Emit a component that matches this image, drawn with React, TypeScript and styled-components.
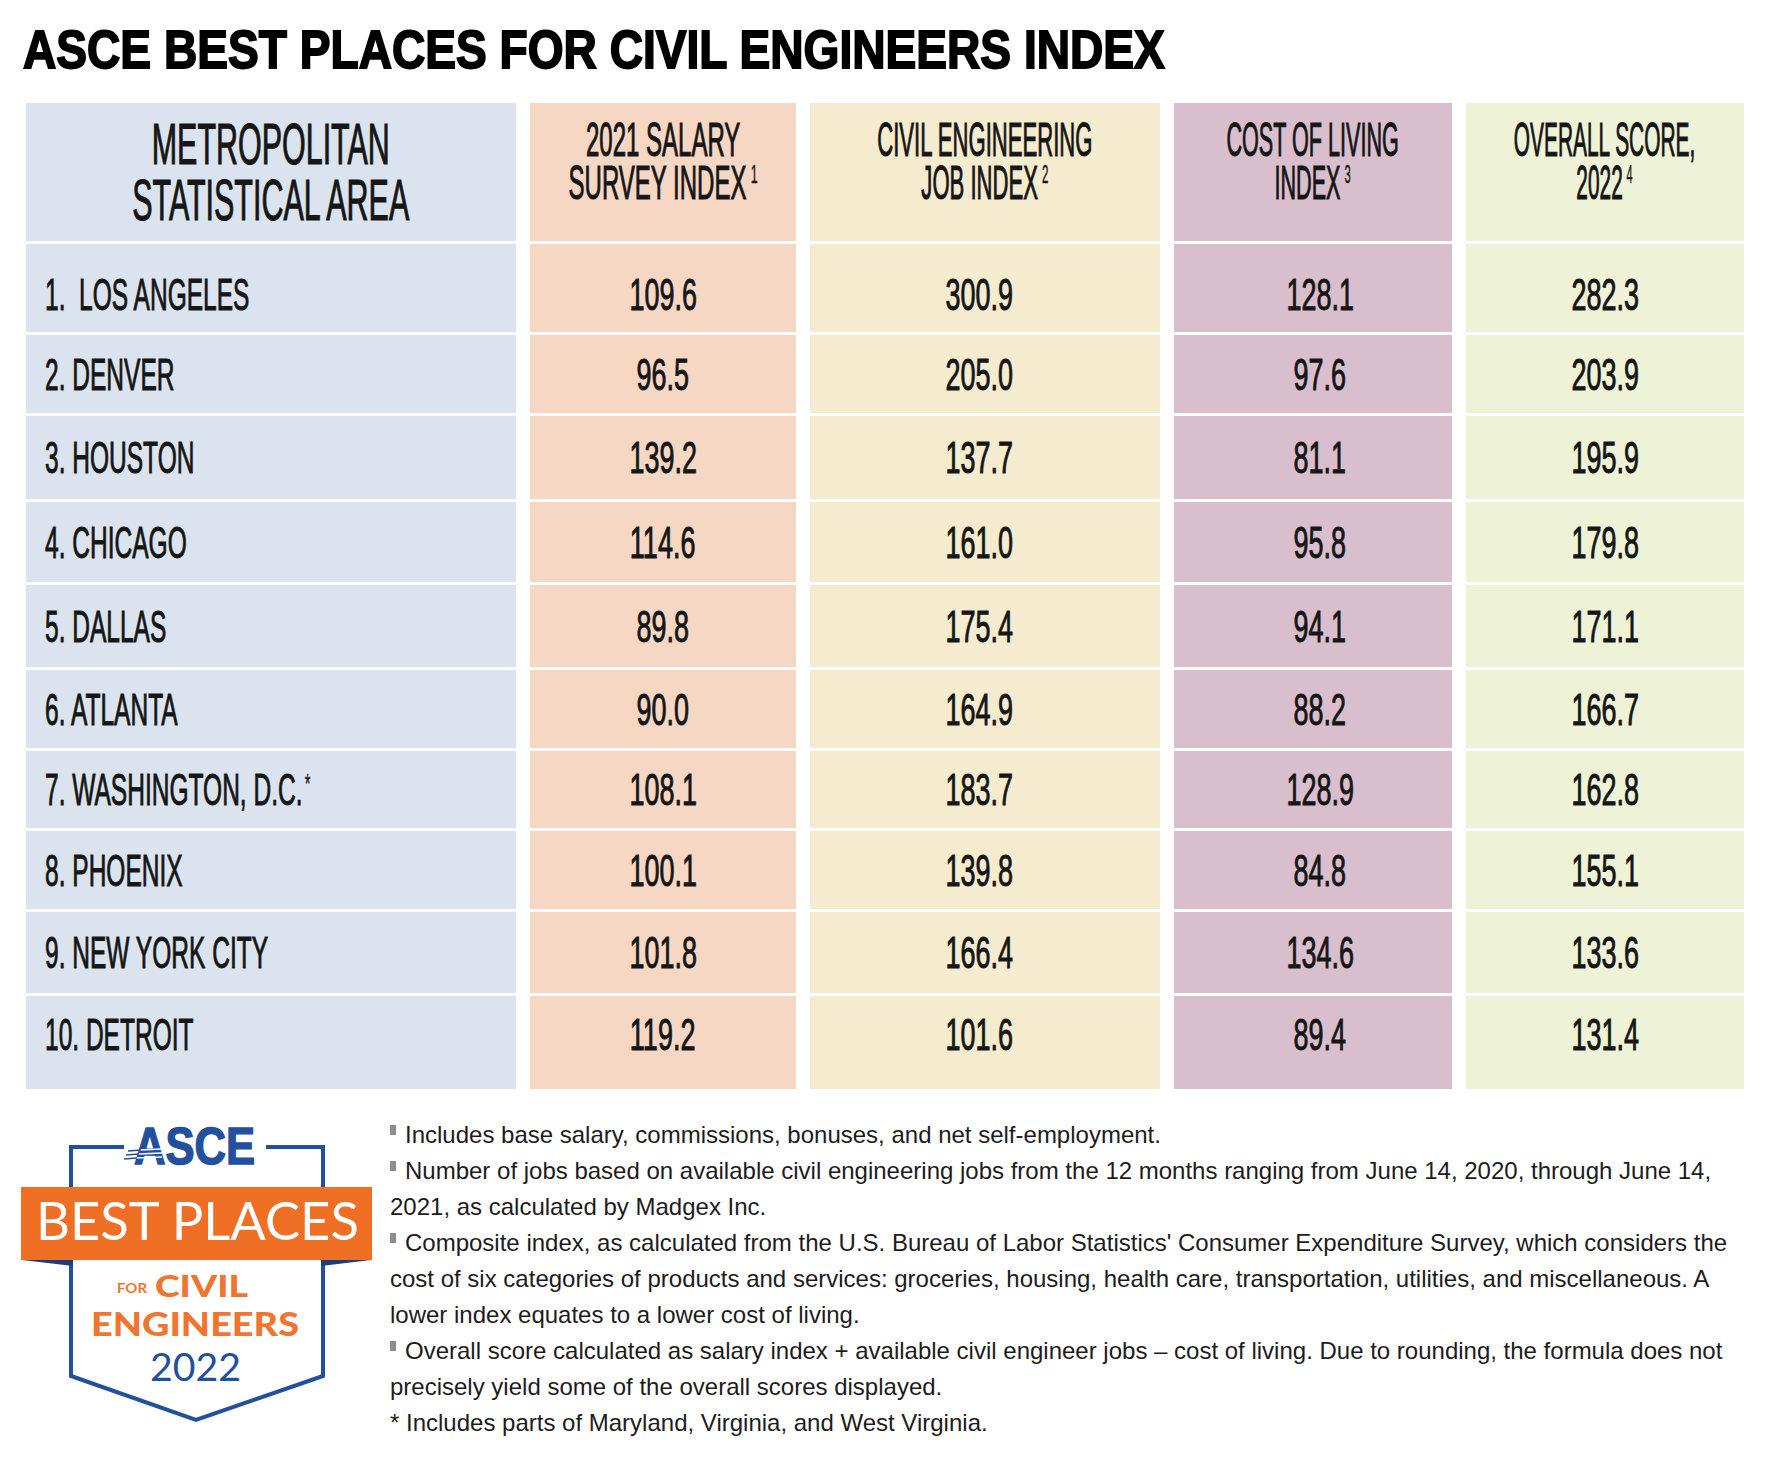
import React from "react";
import styled, { createGlobalStyle } from "styled-components";

// Global
const GlobalStyle = createGlobalStyle`
  html, body {
    margin: 0;
    padding: 0;
    background: #ffffff;
  }
`;

// Colonnes (shift = décalage horizontal des chiffres)
const COLS = [
  { bg: "#dbe4ee", shift: 0 },
  { bg: "#f6d7c4", shift: 0 },
  { bg: "#f5ebcf", shift: -6 },
  { bg: "#d9bfce", shift: 7 },
  { bg: "#eef3d7", shift: 0 },
];

const ROWS = [
  ["1.  LOS ANGELES", "109.6", "300.9", "128.1", "282.3"],
  ["2. DENVER", "96.5", "205.0", "97.6", "203.9"],
  ["3. HOUSTON", "139.2", "137.7", "81.1", "195.9"],
  ["4. CHICAGO", "114.6", "161.0", "95.8", "179.8"],
  ["5. DALLAS", "89.8", "175.4", "94.1", "171.1"],
  ["6. ATLANTA", "90.0", "164.9", "88.2", "166.7"],
  ["7. WASHINGTON, D.C.", "108.1", "183.7", "128.9", "162.8"],
  ["8. PHOENIX", "100.1", "139.8", "84.8", "155.1"],
  ["9. NEW YORK CITY", "101.8", "166.4", "134.6", "133.6"],
  ["10. DETROIT", "119.2", "101.6", "89.4", "131.4"],
];

// Styled Components
const Page = styled.div`
  width: 1769px;
  height: 1469px;
  box-sizing: border-box;
  padding: 23px 0 0 20px;
  background: #ffffff;
  font-family: "Liberation Sans", Arial, sans-serif;
  color: #111111;
  overflow: hidden;
`;

const Title = styled.h1`
  margin: 0 0 27px 3px;
  font-size: 53px;
  line-height: 53px;
  font-weight: 700;
  color: #000000;
  white-space: nowrap;
  transform: scaleX(0.87);
  transform-origin: left center;
  -webkit-text-stroke: 1.8px #000000;
`;

const Table = styled.div`
  display: grid;
  grid-template-columns: 490px 266px 350px 278px 278px;
  grid-template-rows: 138px 88px 78px 83px 80px 82px 78px 77px 78px 81px 93px;
  column-gap: 14px;
  row-gap: 3px;
  margin-left: 6px;
`;

const HeadCell = styled.div<{ $bg: string; $main?: boolean }>`
  background: ${(p) => p.$bg};
  display: flex;
  justify-content: center;
  align-items: ${(p) => (p.$main ? "center" : "flex-start")};
  padding-top: ${(p) => (p.$main ? "0" : "15px")};
  box-sizing: border-box;
  min-width: 0;
  text-align: center;
  font-weight: 400;
  -webkit-text-stroke: 1.1px #161616;
  color: #161616;
  font-size: ${(p) => (p.$main ? "58px" : "48px")};
  line-height: ${(p) => (p.$main ? "56px" : "43px")};
`;

const Cell = styled.div<{ $bg: string; $label?: boolean; $shift?: number; $first?: boolean; $last?: boolean }>`
  background: ${(p) => p.$bg};
  display: flex;
  align-items: center;
  justify-content: ${(p) => (p.$label ? "flex-start" : "center")};
  box-sizing: border-box;
  padding-left: ${(p) => (p.$label ? 19 : Math.max(0, (p.$shift || 0) * 2))}px;
  padding-right: ${(p) => Math.max(0, -(p.$shift || 0) * 2)}px;
  padding-top: ${(p) => (p.$first ? "12px" : "0")};
  padding-bottom: ${(p) => (p.$last ? "16px" : "0")};
  min-width: 0;
  font-size: 45px;
  line-height: 45px;
  font-weight: 400;
  color: #161616;
  -webkit-text-stroke: 1px #161616;
`;

const Squeeze = styled.span<{ $sx: number; $left?: boolean }>`
  display: inline-block;
  flex: none;
  white-space: pre;
  transform: scaleX(${(p) => p.$sx});
  transform-origin: ${(p) => (p.$left ? "left center" : "center center")};
`;

const Sup = styled.span`
  position: relative;
  top: -0.64em;
  margin-left: 0.35em;
  font-size: 0.52em;
  line-height: 0;
  -webkit-text-stroke: 0.4px #161616;
`;

const Star = styled.span`
  position: relative;
  top: -0.45em;
  margin-left: 0.15em;
  font-size: 0.6em;
  line-height: 0;
  -webkit-text-stroke: 0.3px #161616;
`;

const Bottom = styled.div`
  display: flex;
  align-items: flex-start;
  gap: 18px;
  margin-top: 28px;
`;

const Badge = styled.svg`
  flex: none;
  margin-top: 5px;
  display: block;
`;

const Notes = styled.div`
  font-family: "Liberation Sans", Arial, sans-serif;
  font-size: 24px;
  line-height: 36px;
  color: #1e1b1c;
  white-space: nowrap;
`;

const Line = styled.div``;

const Marker = styled.span`
  display: inline-block;
  width: 6px;
  height: 10px;
  margin-right: 9px;
  background: #8c8c8c;
  vertical-align: 8px;
`;

function Logo() {
  return (
    <Badge width={352} height={302} viewBox="0 0 352 302">
      <path
        d="M104 25 H51 V254 L176 298 L303 254 V25 H246"
        fill="none"
        stroke="#22509c"
        strokeWidth={4}
      />
      <polygon points="2,138 53,138 53,144" fill="#1c3e7c" />
      <polygon points="351,138 301,138 301,144" fill="#1c3e7c" />
      <rect x={1} y={65} width={351} height={73} fill="#ef6f25" />
      <text
        x={114}
        y={42}
        fontFamily="Liberation Sans, Arial, sans-serif"
        fontWeight={700}
        fontSize={52}
        fill="#22509c"
        stroke="#22509c"
        strokeWidth={1.5}
        textLength={121}
        lengthAdjust="spacingAndGlyphs"
      >
        ASCE
      </text>
      <g stroke="#ffffff" strokeWidth={1.6}>
        <line x1={120} y1={28} x2={142} y2={27} />
        <line x1={118} y1={32} x2={142} y2={31} />
        <line x1={116} y1={36} x2={142} y2={35} />
      </g>
      <g stroke="#22509c" strokeWidth={1.6}>
        <line x1={108} y1={29} x2={121} y2={28} />
        <line x1={106} y1={33} x2={119} y2={32} />
        <line x1={104} y1={37} x2={117} y2={36} />
      </g>
      <text
        x={16}
        y={118}
        fontFamily="Lato, sans-serif"
        fontWeight={400}
        fontSize={52}
        fill="#ffffff"
        textLength={323}
        lengthAdjust="spacingAndGlyphs"
      >
        BEST PLACES
      </text>
      <text
        x={97}
        y={171}
        fontFamily="Lato, sans-serif"
        fontWeight={700}
        fontSize={14}
        fill="#ef7531"
        textLength={30}
        lengthAdjust="spacingAndGlyphs"
      >
        FOR
      </text>
      <text
        x={135}
        y={175}
        fontFamily="Lato, sans-serif"
        fontWeight={900}
        fontSize={31}
        fill="#ef7531"
        textLength={93}
        lengthAdjust="spacingAndGlyphs"
      >
        CIVIL
      </text>
      <text
        x={71}
        y={214}
        fontFamily="Lato, sans-serif"
        fontWeight={900}
        fontSize={33}
        fill="#ef7531"
        textLength={208}
        lengthAdjust="spacingAndGlyphs"
      >
        ENGINEERS
      </text>
      <text
        x={130}
        y={259}
        fontFamily="Lato, sans-serif"
        fontWeight={400}
        fontSize={39}
        fill="#22509c"
        textLength={91}
        lengthAdjust="spacingAndGlyphs"
      >
        2022
      </text>
    </Badge>
  );
}

function App() {
  return (
    <React.Fragment>
      <GlobalStyle />
      <Page>
        <Title>ASCE BEST PLACES FOR CIVIL ENGINEERS INDEX</Title>

        {/* Tableau */}
        <Table>
          <HeadCell $bg={COLS[0].bg} $main>
            <Squeeze $sx={0.525}>
              METROPOLITAN
              <br />
              STATISTICAL AREA
            </Squeeze>
          </HeadCell>
          <HeadCell $bg={COLS[1].bg}>
            <Squeeze $sx={0.5}>
              2021 SALARY
              <br />
              SURVEY INDEX<Sup>1</Sup>
            </Squeeze>
          </HeadCell>
          <HeadCell $bg={COLS[2].bg}>
            <Squeeze $sx={0.46}>
              CIVIL ENGINEERING
              <br />
              JOB INDEX<Sup>2</Sup>
            </Squeeze>
          </HeadCell>
          <HeadCell $bg={COLS[3].bg}>
            <Squeeze $sx={0.45}>
              COST OF LIVING
              <br />
              INDEX<Sup>3</Sup>
            </Squeeze>
          </HeadCell>
          <HeadCell $bg={COLS[4].bg}>
            <Squeeze $sx={0.435}>
              OVERALL SCORE,
              <br />
              2022<Sup>4</Sup>
            </Squeeze>
          </HeadCell>

          {ROWS.map((row, r) =>
            row.map((value, c) =>
              c === 0 ? (
                <Cell
                  key={`${r}-${c}`}
                  $bg={COLS[c].bg}
                  $label
                  $first={r === 0}
                  $last={r === ROWS.length - 1}
                >
                  <Squeeze $sx={0.545} $left>
                    {value}
                    {r === 6 && <Star>*</Star>}
                  </Squeeze>
                </Cell>
              ) : (
                <Cell
                  key={`${r}-${c}`}
                  $bg={COLS[c].bg}
                  $shift={COLS[c].shift}
                  $first={r === 0}
                  $last={r === ROWS.length - 1}
                >
                  <Squeeze $sx={0.6}>{value}</Squeeze>
                </Cell>
              )
            )
          )}
        </Table>

        {/* Notes */}
        <Bottom>
          <Logo />
          <Notes>
            <Line>
              <Marker />
              Includes base salary, commissions, bonuses, and net self-employment.
            </Line>
            <Line>
              <Marker />
              Number of jobs based on available civil engineering jobs from the 12 months ranging from June 14, 2020, through June 14,
            </Line>
            <Line>2021, as calculated by Madgex Inc.</Line>
            <Line>
              <Marker />
              Composite index, as calculated from the U.S. Bureau of Labor Statistics' Consumer Expenditure Survey, which considers the
            </Line>
            <Line>
              cost of six categories of products and services: groceries, housing, health care, transportation, utilities, and miscellaneous. A
            </Line>
            <Line>lower index equates to a lower cost of living.</Line>
            <Line>
              <Marker />
              Overall score calculated as salary index + available civil engineer jobs – cost of living. Due to rounding, the formula does not
            </Line>
            <Line>precisely yield some of the overall scores displayed.</Line>
            <Line>* Includes parts of Maryland, Virginia, and West Virginia.</Line>
          </Notes>
        </Bottom>
      </Page>
    </React.Fragment>
  );
}

export default App;
